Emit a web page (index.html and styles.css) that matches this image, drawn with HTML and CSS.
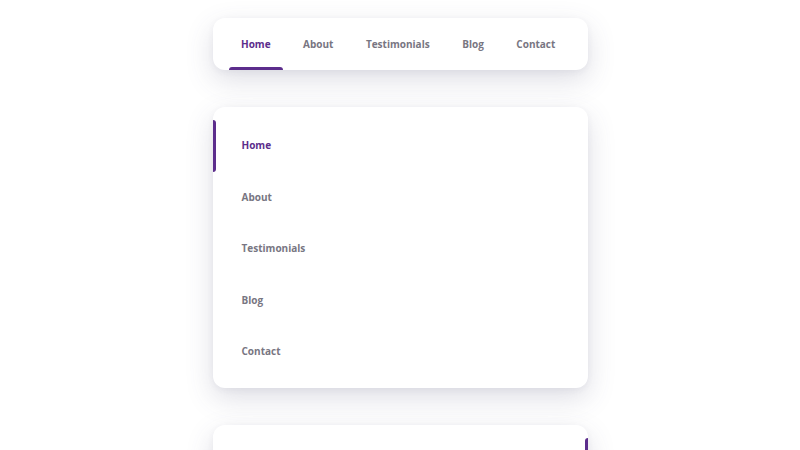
FILE: index.html
```html
<!DOCTYPE html>
<html lang="en">
<head>
<meta charset="utf-8">
<title>Navigation</title>
<link rel="stylesheet" href="styles.css">
</head>
<body>
<main class="stack">
  <nav class="card card-h">
    <ul class="menu-h">
      <li class="item-h active">Home</li>
      <li class="item-h">About</li>
      <li class="item-h">Testimonials</li>
      <li class="item-h">Blog</li>
      <li class="item-h">Contact</li>
    </ul>
  </nav>
  <nav class="card card-v">
    <ul class="menu-v">
      <li class="item-v active">Home</li>
      <li class="item-v">About</li>
      <li class="item-v">Testimonials</li>
      <li class="item-v">Blog</li>
      <li class="item-v">Contact</li>
    </ul>
  </nav>
  <nav class="card card-v card-right">
    <ul class="menu-v">
      <li class="item-v active">Home</li>
      <li class="item-v">About</li>
      <li class="item-v">Testimonials</li>
      <li class="item-v">Blog</li>
      <li class="item-v">Contact</li>
    </ul>
  </nav>
</main>
</body>
</html>
```
FILE: styles.css
```css
* { box-sizing: border-box; }
html, body { margin: 0; padding: 0; background: #ffffff; }
body {
  font-family: "Open Sans", "Liberation Sans", sans-serif;
  font-size: 10px;
  font-weight: 700;
  color: #787682;
}
.stack {
  display: flex;
  flex-direction: column;
  align-items: center;
  gap: 37px;
  padding-top: 18px;
}
.card {
  width: 375px;
  background: #fff;
  border-radius: 12px;
  box-shadow: 0 10px 28px rgba(70, 70, 110, 0.18), 0 2px 6px rgba(70, 70, 110, 0.06);
}
ul { list-style: none; margin: 0; padding: 0; }
.card-h { height: 52px; padding: 0 16.5px; overflow: hidden; }
.menu-h {
  display: flex;
  height: 100%;
  gap: 8.5px;
}
.item-h {
  position: relative;
  display: flex;
  align-items: center;
  padding: 0 12px;
  height: 100%;
}
.active { color: #5c2d8c; }
.item-h.active::after {
  content: "";
  position: absolute;
  left: 0;
  right: 0;
  bottom: 0;
  height: 3px;
  background: #5c2d8c;
  border-radius: 3px 3px 0 0;
}
.card-v { padding: 13px 0 10px; }
.item-v {
  position: relative;
  display: flex;
  align-items: center;
  height: 51.5px;
  padding-left: 29px;
  padding-bottom: 1px;
}
.item-v.active::before {
  content: "";
  position: absolute;
  left: 0;
  top: 0;
  bottom: 0;
  width: 3px;
  background: #5c2d8c;
  border-radius: 0 3px 3px 0;
}
.card-right .item-v.active::before {
  left: auto;
  right: 0;
  border-radius: 3px 0 0 3px;
}
```
